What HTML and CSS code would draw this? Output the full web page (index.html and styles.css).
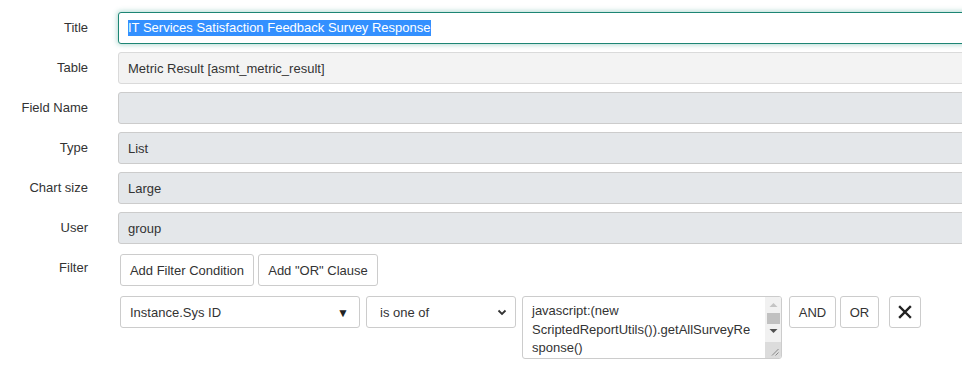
FILE: index.html
```html
<!DOCTYPE html>
<html>
<head>
<meta charset="utf-8">
<link rel="stylesheet" href="styles.css">
</head>
<body>
<div class="form">
  <div class="row">
    <div class="label">Title</div>
    <div class="field field-focus"><span class="sel">IT Services Satisfaction Feedback Survey Response</span></div>
  </div>
  <div class="row">
    <div class="label">Table</div>
    <div class="field field-light">Metric Result [asmt_metric_result]</div>
  </div>
  <div class="row">
    <div class="label">Field Name</div>
    <div class="field field-ro"></div>
  </div>
  <div class="row">
    <div class="label">Type</div>
    <div class="field field-ro">List</div>
  </div>
  <div class="row">
    <div class="label">Chart size</div>
    <div class="field field-ro">Large</div>
  </div>
  <div class="row">
    <div class="label">User</div>
    <div class="field field-ro">group</div>
  </div>
  <div class="row row-filter">
    <div class="label">Filter</div>
    <div class="filter">
      <div class="btn-row">
        <div class="btn btn-cond">Add Filter Condition</div>
        <div class="btn btn-or-clause">Add "OR" Clause</div>
      </div>
      <div class="cond-row">
        <div class="select select-field">
          <span>Instance.Sys ID</span>
          <span class="tri">&#9660;</span>
        </div>
        <div class="select select-op">
          <span>is one of</span>
          <svg class="chev" width="10" height="7" viewBox="0 0 10 7"><path d="M1.5 1.5 L5 5 L8.5 1.5" fill="none" stroke="#333" stroke-width="1.8"/></svg>
        </div>
        <div class="textarea">
          <div class="ta-text">javascript:(new<br>ScriptedReportUtils()).getAllSurveyRe<br>sponse()</div>
          <div class="scrollbar">
            <div class="sb-track">
              <svg class="sb-arrow" width="9" height="6" viewBox="0 0 9 6"><path d="M0.5 5 L4.5 1 L8.5 5 Z" fill="#c4c4c4"/></svg>
              <div class="sb-thumb"></div>
              <svg class="sb-arrow" width="9" height="6" viewBox="0 0 9 6"><path d="M0.5 1 L4.5 5 L8.5 1 Z" fill="#505050"/></svg>
            </div>
            <div class="sb-corner">
              <svg width="8" height="8" viewBox="0 0 8 8"><path d="M7.5 1 L1 7.5 M7.5 4.5 L4.5 7.5" stroke="#888" stroke-width="1"/></svg>
            </div>
          </div>
        </div>
        <div class="btn btn-small">AND</div>
        <div class="btn btn-small btn-or">OR</div>
        <div class="btn btn-x">
          <svg width="14" height="14" viewBox="0 0 14 14"><path d="M2 2 L12 12 M12 2 L2 12" stroke="#222" stroke-width="2.4" stroke-linecap="square"/></svg>
        </div>
      </div>
    </div>
  </div>
</div>
</body>
</html>
```
FILE: styles.css
```css
html, body {
  margin: 0;
  padding: 0;
  background: #fff;
  overflow: hidden;
}
body {
  font-family: "Liberation Sans", Arial, sans-serif;
  font-size: 13px;
  color: #333;
  width: 962px;
  height: 371px;
}
.form {
  width: 1000px;
  padding-top: 12px;
  display: flex;
  flex-direction: column;
  gap: 8px;
}
.row {
  display: grid;
  grid-template-columns: 88px 1fr;
  column-gap: 30px;
  align-items: center;
}
.label {
  text-align: right;
  color: #333;
  font-size: 13px;
  padding-bottom: 1px;
}
.field {
  box-sizing: border-box;
  height: 32px;
  border: 1px solid #ccc;
  border-radius: 3px;
  padding: 0 9px;
  display: flex;
  align-items: center;
  color: #333;
  white-space: nowrap;
}
.field-focus {
  border-color: #1d8574;
  box-shadow: 0 0 5px 1px rgba(40, 150, 130, 0.35);
  background: #fff;
}
.sel {
  background: #3390ff;
  color: #fff;
  line-height: 16px;
}
.field-light {
  background: #f3f3f3;
  border-color: #dadada;
}
.field-ro {
  background: #e4e7ea;
  border-color: #ccc;
}
.row-filter {
  align-items: start;
  padding-top: 2px;
}
.row-filter .label {
  padding-top: 6px;
}
.filter {
  display: flex;
  flex-direction: column;
  gap: 10px;
  padding-left: 2px;
}
.btn-row, .cond-row {
  display: flex;
  gap: 4px;
  align-items: flex-start;
}
.btn {
  box-sizing: border-box;
  height: 32px;
  border: 1px solid #ccc;
  border-radius: 3px;
  background: #fff;
  display: flex;
  align-items: center;
  justify-content: center;
  color: #333;
  white-space: nowrap;
}
.btn-cond { width: 134px; }
.btn-or-clause { width: 120px; }
.select {
  box-sizing: border-box;
  height: 32px;
  border: 1px solid #ccc;
  border-radius: 3px;
  background: #fff;
  display: flex;
  align-items: center;
  justify-content: space-between;
}
.select-field {
  width: 240px;
  padding: 0 10px 0 9px;
}
.tri {
  font-size: 12px;
  color: #222;
  padding-top: 1px;
}
.select-op {
  width: 150px;
  margin-left: 2px;
  padding: 0 8px 0 13px;
}
.chev { margin-top: 1px; }
.textarea {
  box-sizing: border-box;
  width: 260px;
  height: 63px;
  margin-left: 2px;
  border: 1px solid #ccc;
  border-radius: 3px;
  background: #fff;
  display: flex;
  overflow: hidden;
  margin-right: 3px;
}
.ta-text {
  flex: 1;
  padding: 5px 0 0 9px;
  line-height: 18.5px;
  color: #333;
  white-space: nowrap;
  overflow: hidden;
}
.scrollbar {
  width: 16px;
  display: flex;
  flex-direction: column;
}
.sb-track {
  flex: 1;
  background: #f1f1f1;
  display: flex;
  flex-direction: column;
  align-items: center;
  padding-top: 5px;
}
.sb-thumb {
  width: 13px;
  height: 11px;
  background: #c1c1c1;
  margin: 5px 0 4px;
}
.sb-corner {
  height: 16px;
  background: #dcdcdc;
  display: flex;
  align-items: flex-end;
  justify-content: flex-end;
  padding: 0 2px 2px 0;
  box-sizing: border-box;
}
.btn-small {
  width: 47px;
}
.btn-or {
  width: 39px;
}
.btn-x {
  width: 32px;
  margin-left: 6px;
}
```
